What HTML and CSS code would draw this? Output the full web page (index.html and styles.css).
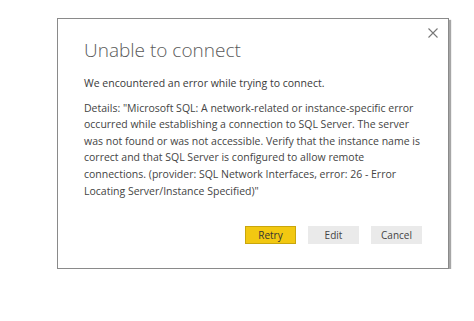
FILE: index.html
```html
<!DOCTYPE html>
<html lang="en">
<head>
    <meta charset="UTF-8">
    <title>Unable to connect</title>
    <link rel="stylesheet" href="styles.css">
</head>
<body>

<div class="dialog">
    <button class="close-button" aria-label="Close">
        <svg width="10" height="10" viewBox="0 0 10 10">
            <path d="M0.5 0.5 L9.5 9.5 M9.5 0.5 L0.5 9.5" stroke="#777" stroke-width="1.1" fill="none"/>
        </svg>
    </button>
    <h1 class="dialog-title">Unable to connect</h1>
    <p class="dialog-text">We encountered an error while trying to connect.</p>
    <p class="dialog-text details">Details: "Microsoft SQL: A network-related or instance-specific error<br>
        occurred while establishing a connection to SQL Server. The server<br>
        was not found or was not accessible. Verify that the instance name is<br>
        correct and that SQL Server is configured to allow remote<br>
        connections. (provider: SQL Network Interfaces, error: 26 - Error<br>
        Locating Server/Instance Specified)"</p>
    <div class="dialog-buttons">
        <button class="btn btn-primary">Retry</button>
        <button class="btn">Edit</button>
        <button class="btn">Cancel</button>
    </div>
</div>

</body>
</html>
```

FILE: styles.css
```css
body {
    margin: 0;
    padding: 0;
    background-color: #fff;
    font-family: 'Open Sans', 'Noto Sans', sans-serif;
    color: #444;
}

.dialog {
    position: relative;
    box-sizing: border-box;
    width: 392px;
    height: 251px;
    margin: 18px 0 0 57px;
    padding: 17px 26px 0 26px;
    background-color: #fff;
    border: 1px solid #8a8a8a;
    box-shadow: 2px 2px 1px rgba(0, 0, 0, 0.35);
    display: flex;
    flex-direction: column;
}

.close-button {
    position: absolute;
    top: 7px;
    right: 10px;
    padding: 0;
    border: none;
    background: transparent;
    cursor: pointer;
}

.dialog-title {
    margin: 0;
    font-size: 19px;
    font-weight: 300;
    line-height: 28px;
    color: #5a5a5a;
}

.dialog-text {
    margin: 11px 0 0 0;
    font-size: 10.5px;
    line-height: 16.6px;
    color: #3a3a3a;
}

.details {
    margin-top: 8px;
    color: #444;
}

.dialog-buttons {
    display: flex;
    justify-content: flex-end;
    gap: 12px;
    margin-top: auto;
    margin-bottom: 24px;
}

.btn {
    width: 51px;
    height: 18px;
    padding: 0;
    border: 1px solid #eaeaea;
    background-color: #eaeaea;
    font-family: 'Open Sans', sans-serif;
    font-size: 10px;
    color: #444;
    cursor: pointer;
}

.btn-primary {
    background-color: #f2c811;
    border-color: #c9a60c;
    color: #333;
}
```
